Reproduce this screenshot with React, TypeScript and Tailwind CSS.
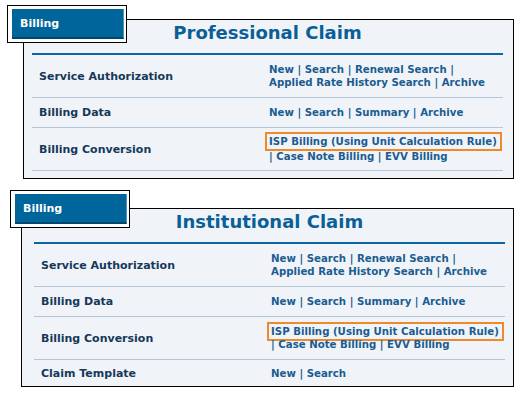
import React from 'react'

type Row = {
  label: string
  links?: React.ReactNode
  tall?: boolean
  pad?: string
}

const Sep = () => <span> | </span>

const Tab = ({ className }: { className: string }) => (
  <div className={`absolute bg-white border border-black pt-[3px] pb-[3px] pl-[4px] pr-[2px] ${className}`}>
    {/* Blue tab face */}
    <div className="w-[112px] h-[30px] bg-[#00659a] border-b-2 border-[#00476c] border-r border-r-[#4d94bd] pl-[8px] pt-[8px] text-white text-[11px] font-bold leading-[13px]">
      Billing
    </div>
  </div>
)

const Panel = ({
  title,
  rows,
  boxPad,
  className,
  lastLine,
}: {
  title: string
  rows: Row[]
  boxPad: string
  className: string
  lastLine: boolean
}) => (
  <div className={`bg-[#f0f4f8] border border-black ${className}`}>
    <div className="h-[35px] pt-[2px] text-center text-[18px] font-bold leading-[22px] text-[#0b5f97] border-b-2 border-[#0b66a0]">
      {title}
    </div>
    {rows.map((r, i) => (
      <div
        key={r.label}
        className={`flex items-center ${r.pad ?? 'py-[8px]'} ${i < rows.length - 1 || lastLine ? 'border-b border-[#b3c7d6]' : ''}`}
      >
        <div className="w-[237px] pl-[7px] text-[11px] font-bold text-[#17385a] leading-[13px]">{r.label}</div>
        <div className="flex-1 text-[10.2px] font-bold text-[#1b5c91] leading-[13px]">
          {r.tall ? (
            <>
              <div className={boxPad}>
                <span className="-ml-[4px] border-2 border-[#f0892a] pl-[2px] pr-[3px] py-[2px]">
                  ISP Billing (Using Unit Calculation Rule)
                </span>
              </div>
              <div>
                <Sep />Case Note Billing<Sep />EVV Billing
              </div>
            </>
          ) : (
            r.links
          )}
        </div>
      </div>
    ))}
  </div>
)

const saRow: Row = {
  label: 'Service Authorization',
  links: (
    <>
      New<Sep />Search<Sep />Renewal Search |<br />
      Applied Rate History Search<Sep />Archive
    </>
  ),
}

const bdRow: Row = {
  label: 'Billing Data',
  links: (
    <>
      New<Sep />Search<Sep />Summary<Sep />Archive
    </>
  ),
}

export default function App() {
  return (
    <div className="w-[522px] h-[393px] bg-white" style={{ fontFamily: '"DejaVu Sans", Verdana, sans-serif' }}>
      <div className="relative pt-[19px] pl-[23px] w-[514px]">
        <Tab className="left-[7px] top-[5px]" />
        <Panel
          title="Professional Claim"
          className="pl-[8px] pr-[10px] pb-[7px]"
          lastLine
          boxPad="mb-[2px]"
          rows={[saRow, bdRow, { label: 'Billing Conversion', tall: true, pad: 'pt-[7px] pb-[7px]' }]}
        />
      </div>
      <div className="relative pt-[29px] pl-[21px] w-[514px]">
        <Tab className="left-[10px] top-[11px]" />
        <Panel
          title="Institutional Claim"
          className="pl-[12px] pr-[8px]"
          lastLine={false}
          boxPad=""
          rows={[
            saRow,
            bdRow,
            { label: 'Billing Conversion', tall: true },
            {
              label: 'Claim Template',
              pad: 'pt-[7px] pb-[6px]',
              links: (
                <>
                  New<Sep />Search
                </>
              ),
            },
          ]}
        />
      </div>
    </div>
  )
}
